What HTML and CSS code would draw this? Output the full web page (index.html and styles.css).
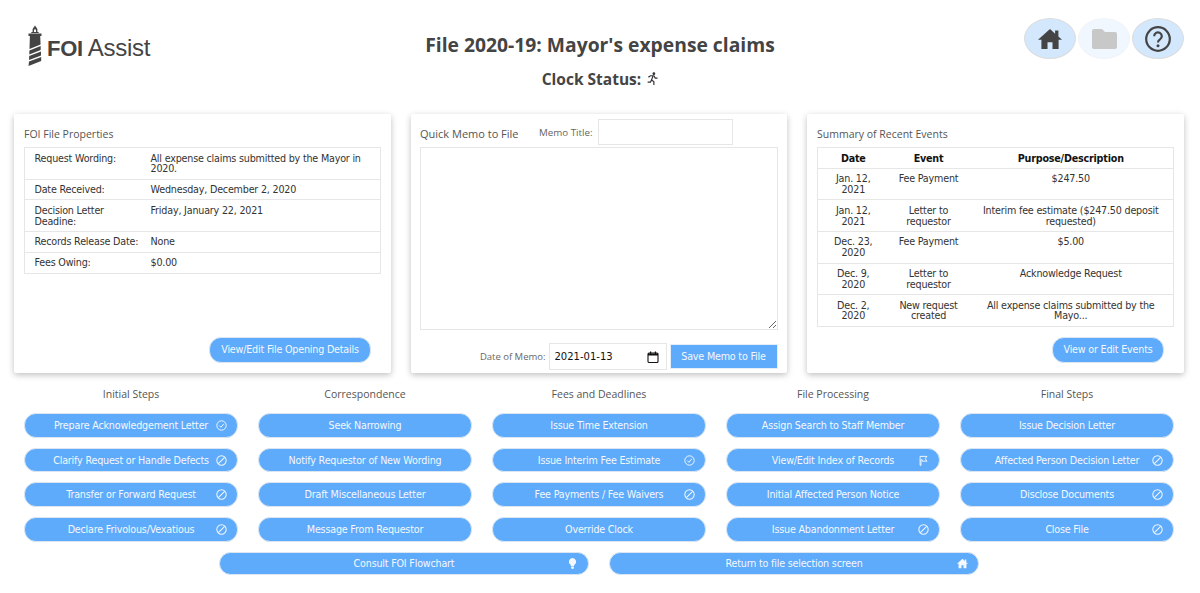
FILE: index.html
```html
<!DOCTYPE html>
<html lang="en">
<head>
    <meta charset="UTF-8">
    <title>FOI Assist</title>
    <link rel="stylesheet" href="styles.css">
</head>
<body>
    <svg class="defs" width="0" height="0">
        <symbol id="i-ban" viewBox="0 0 16 16">
            <circle cx="8" cy="8" r="6.8" fill="none" stroke="currentColor" stroke-width="1.5"/>
            <path d="M3.4 12.6 12.6 3.4" stroke="currentColor" stroke-width="1.5"/>
        </symbol>
        <symbol id="i-check" viewBox="0 0 16 16">
            <circle cx="8" cy="8" r="6.8" fill="none" stroke="currentColor" stroke-width="1.4"/>
            <path d="M4.8 8.2 7.2 10.6 11.4 5.6" fill="none" stroke="currentColor" stroke-width="1.4"/>
        </symbol>
        <symbol id="i-flag" viewBox="0 0 16 16">
            <path d="M3 15V2h10l-2.500 3.500L13 9H6.500L6 7H4.300v8z" fill="none" stroke="currentColor" stroke-width="1.400"/>
        </symbol>
        <symbol id="i-bulb" viewBox="0 0 16 16">
            <path d="M8 0a5.300 5.300 0 0 0-3.200 9.500c.7.600 1 1.200 1 2h4.400c0-.8.300-1.400 1-2A5.300 5.300 0 0 0 8 0z" fill="currentColor"/>
            <path d="M6 12.500h4V14l-1 2H7l-1-2z" fill="currentColor"/>
        </symbol>
        <symbol id="i-home" viewBox="0 0 16 16">
            <path d="M8 1 0 8.500h2.300V15h4.200v-4.500h3V15h4.200V8.500H16L13.500 6.200V2.200h-2v2.100z" fill="currentColor"/>
        </symbol>
    </svg>

    <header class="top">
        <div class="logo">
            <svg class="logo-mark" viewBox="0 0 16 44" width="16" height="44">
                <path d="M5.600 5 8 1.500 10.400 5v3h1.300v1H4.300V8h1.300zM7 5.500V8h2V5.500z" fill="#444"/>
                <path d="M1.500 9.500h13v2.500h-1.300l.4 8.500L2.500 25l.4-13H1.500z" fill="#444"/>
                <path d="M2.400 26.500 13.700 22v4L2.300 30.500z" fill="#444"/>
                <path d="M2.200 32 14 27.500v4L2.100 36z" fill="#444"/>
                <path d="M2 37.500 14.200 33v4L1.500 42z" fill="#444"/>
            </svg>
            <span class="logo-text"><b>FOI</b> Assist</span>
        </div>
        <div class="heading">
            <h1>File 2020-19: Mayor's expense claims</h1>
            <h2>Clock Status:
                <svg class="runner" viewBox="0 0 12 14" width="11" height="13">
                    <circle cx="7.500" cy="1.700" r="1.500" fill="#333"/>
                    <path d="M1.500 5.500 4 4h3.500l1.500 2.500h2.500M6.500 4.500 5 8.500l2.500 2V14M5 8.500 3.800 11H.7" fill="none" stroke="#333" stroke-width="1.300"/>
                </svg>
            </h2>
        </div>
        <nav class="nav-icons">
            <a class="nav-btn" href="javascript:">
                <svg viewBox="0 0 24 20" width="24" height="20"><path d="M12 0 0 10.800h3.400V20h6.100v-6.700h5V20h6.100v-9.200H24l-3.600-3.200V1.400h-3.300v3.300z" fill="#444"/></svg>
            </a>
            <a class="nav-btn nav-off" href="javascript:">
                <svg viewBox="0 0 25 20" width="25" height="20"><path d="M2 0h8l3 3h10a2 2 0 0 1 2 2v13a2 2 0 0 1-2 2H2a2 2 0 0 1-2-2V2a2 2 0 0 1 2-2z" fill="#c8c8c8"/></svg>
            </a>
            <a class="nav-btn" href="javascript:">
                <svg viewBox="0 0 26 26" width="26" height="26">
                    <circle cx="13" cy="13" r="11.800" fill="none" stroke="#444" stroke-width="2.200"/>
                    <path d="M9.200 10.200a3.800 3.800 0 1 1 5.800 3.200c-1.300.8-2 1.500-2 3" fill="none" stroke="#444" stroke-width="2.200"/>
                    <circle cx="13" cy="19.800" r="1.500" fill="#444"/>
                </svg>
            </a>
        </nav>
    </header>

    <main class="panels">
        <section class="panel">
            <div class="panel-title">FOI File Properties</div>
            <table class="info props">
                <tr><td class="props-label">Request Wording:</td><td>All expense claims submitted by the Mayor in 2020.</td></tr>
                <tr><td class="props-label">Date Received:</td><td>Wednesday, December 2, 2020</td></tr>
                <tr><td class="props-label">Decision Letter Deadine:</td><td>Friday, January 22, 2021</td></tr>
                <tr><td class="props-label">Records Release Date:</td><td>None</td></tr>
                <tr><td class="props-label">Fees Owing:</td><td>$0.00</td></tr>
            </table>
            <a class="btn panel-btn btn-wide" href="javascript:">View/Edit File Opening Details</a>
        </section>

        <section class="panel panel-memo">
            <div class="memo-top">
                <div class="panel-title">Quick Memo to File</div>
                <label class="memo-label memo-title-label">Memo Title:</label>
                <input class="memo-title" type="text">
            </div>
            <textarea class="memo-text"></textarea>
            <div class="memo-bottom">
                <label class="memo-label">Date of Memo:</label>
                <div class="memo-date">
                    <input type="text" value="2021-01-13">
                    <svg viewBox="0 0 12 12" width="12" height="12">
                        <path d="M1 3a1 1 0 0 1 1-1h8a1 1 0 0 1 1 1v7.500a1 1 0 0 1-1 1H2a1 1 0 0 1-1-1z" fill="none" stroke="#111" stroke-width="1.100"/>
                        <path d="M1 2.500h10v2H1zM3 .5h1.200v2H3zM7.800 .5H9v2H7.800z" fill="#111"/>
                    </svg>
                </div>
                <a class="btn memo-save" href="javascript:">Save Memo to File</a>
            </div>
        </section>

        <section class="panel">
            <div class="panel-title">Summary of Recent Events</div>
            <table class="info events">
                <colgroup><col class="col-date"><col class="col-event"><col></colgroup>
                <tr class="events-head"><th>Date</th><th>Event</th><th>Purpose/Description</th></tr>
                <tr><td>Jan. 12, 2021</td><td>Fee Payment</td><td>$247.50</td></tr>
                <tr><td>Jan. 12, 2021</td><td>Letter to requestor</td><td>Interim fee estimate ($247.50 deposit requested)</td></tr>
                <tr><td>Dec. 23, 2020</td><td>Fee Payment</td><td>$5.00</td></tr>
                <tr><td>Dec. 9, 2020</td><td>Letter to requestor</td><td>Acknowledge Request</td></tr>
                <tr><td>Dec. 2, 2020</td><td>New request created</td><td>All expense claims submitted by the Mayo...</td></tr>
            </table>
            <a class="btn panel-btn btn-events" href="javascript:">View or Edit Events</a>
        </section>
    </main>

    <section class="steps">
        <div class="step-col">
            <div class="step-title">Initial Steps</div>
            <a class="btn step" href="javascript:"><span>Prepare Acknowledgement Letter</span><svg><use href="#i-check"/></svg></a>
            <a class="btn step" href="javascript:"><span>Clarify Request or Handle Defects</span><svg><use href="#i-ban"/></svg></a>
            <a class="btn step" href="javascript:"><span>Transfer or Forward Request</span><svg><use href="#i-ban"/></svg></a>
            <a class="btn step" href="javascript:"><span>Declare Frivolous/Vexatious</span><svg><use href="#i-ban"/></svg></a>
        </div>
        <div class="step-col">
            <div class="step-title">Correspondence</div>
            <a class="btn step" href="javascript:"><span>Seek Narrowing</span></a>
            <a class="btn step" href="javascript:"><span>Notify Requestor of New Wording</span></a>
            <a class="btn step" href="javascript:"><span>Draft Miscellaneous Letter</span></a>
            <a class="btn step" href="javascript:"><span>Message From Requestor</span></a>
        </div>
        <div class="step-col">
            <div class="step-title">Fees and Deadlines</div>
            <a class="btn step" href="javascript:"><span>Issue Time Extension</span></a>
            <a class="btn step" href="javascript:"><span>Issue Interim Fee Estimate</span><svg><use href="#i-check"/></svg></a>
            <a class="btn step" href="javascript:"><span>Fee Payments / Fee Waivers</span><svg><use href="#i-ban"/></svg></a>
            <a class="btn step" href="javascript:"><span>Override Clock</span></a>
        </div>
        <div class="step-col">
            <div class="step-title">File Processing</div>
            <a class="btn step" href="javascript:"><span>Assign Search to Staff Member</span></a>
            <a class="btn step" href="javascript:"><span>View/Edit Index of Records</span><svg><use href="#i-flag"/></svg></a>
            <a class="btn step" href="javascript:"><span>Initial Affected Person Notice</span></a>
            <a class="btn step" href="javascript:"><span>Issue Abandonment Letter</span><svg><use href="#i-ban"/></svg></a>
        </div>
        <div class="step-col">
            <div class="step-title">Final Steps</div>
            <a class="btn step" href="javascript:"><span>Issue Decision Letter</span></a>
            <a class="btn step" href="javascript:"><span>Affected Person Decision Letter</span><svg><use href="#i-ban"/></svg></a>
            <a class="btn step" href="javascript:"><span>Disclose Documents</span><svg><use href="#i-ban"/></svg></a>
            <a class="btn step" href="javascript:"><span>Close File</span><svg><use href="#i-ban"/></svg></a>
        </div>
    </section>

    <div class="bottom-row">
        <a class="btn step step-long" href="javascript:"><span>Consult FOI Flowchart</span><svg><use href="#i-bulb"/></svg></a>
        <a class="btn step step-long" href="javascript:"><span>Return to file selection screen</span><svg><use href="#i-home"/></svg></a>
    </div>
</body>
</html>
```

FILE: styles.css
```css
html, body { height: 100%; }
body {
    margin: 0;
    padding: 0;
    overflow: hidden;
    background: #fff;
    color: #333;
    font-family: "DejaVu Sans", Verdana, sans-serif;
    font-size: 9.600px;
    letter-spacing: -.2px;
}
a { text-decoration: none; }
.defs { display: block; height: 0; }

/* header */
.top {
    display: grid;
    grid-template-columns: 1fr auto 1fr;
    height: 114px;
    padding: 0 16px;
    box-sizing: border-box;
    letter-spacing: 0;
}
.logo {
    display: flex;
    align-items: flex-start;
    gap: 4px;
    padding: 24px 0 0 11px;
}
.logo-text {
    margin-top: 11px;
    font-family: "Liberation Sans", Arial, sans-serif;
    font-size: 24px;
    line-height: 26px;
    color: #444;
    letter-spacing: -.3px;
}
.logo-text b { font-size: 22px; }
.heading {
    font-family: "Open Sans", "Noto Sans", sans-serif;
    color: #444;
    text-align: center;
}
.heading h1 {
    margin: 31px 0 0;
    font-size: 19.300px;
    line-height: 28px;
    font-weight: 700;
}
.heading h2 {
    margin: 9px 0 0;
    font-size: 15.500px;
    line-height: 22px;
    font-weight: 700;
}
.runner { vertical-align: 0; margin-left: 2px; }
.nav-icons {
    display: flex;
    justify-content: flex-end;
    gap: 2px;
    padding-top: 18px;
}
.nav-btn {
    display: flex;
    align-items: center;
    justify-content: center;
    width: 52px;
    height: 41px;
    box-sizing: border-box;
    border: 1px solid #dcdcdc;
    border-radius: 50%;
    background: #d3e7fd;
}
.nav-off {
    background: #f0f7fe;
    border-color: #f0f4f8;
}

/* three panels */
.panels {
    display: grid;
    grid-template-columns: repeat(3, 376.500px);
    grid-template-rows: 259px;
    gap: 20px;
    padding-left: 14px;
}
.panel {
    display: flex;
    flex-direction: column;
    padding: 0 9.500px 10px 10px;
    background: #fff;
    border-radius: 2px;
    box-shadow: 0 2px 6px rgba(0,0,0,.25);
}
.panel-memo { padding: 0 9.500px 3px; }
.panel-title {
    height: 33px;
    line-height: 40px;
    font-family: "Open Sans", "Noto Sans", sans-serif;
    font-size: 10.500px;
    letter-spacing: 0;
    color: #555;
}
.info {
    width: 100%;
    table-layout: fixed;
    border-collapse: collapse;
    border: 1px solid #e6e6e6;
    font-size: 9.600px;
    line-height: 10.800px;
    color: #333;
}
.info td, .info th {
    padding: 5.500px 10px 3.500px 9.500px;
    border-top: 1px solid #e6e6e6;
    vertical-align: top;
}
.info .props-label { width: 105.500px; padding-right: 1px; }
.events { text-align: center; }
.events td, .events th { padding-left: 4px; padding-right: 4px; }
.events td:first-child { padding-left: 10px; padding-right: 10px; }
.col-date { width: 71px; }
.col-event { width: 80px; }
.events-head th { color: #111; }

.btn {
    box-sizing: border-box;
    border: 1px solid #dbe6f2;
    background: #5eaafb;
    color: #f4f8fd;
    font-size: 9.600px;
    text-align: center;
}
.panel-btn {
    align-self: flex-end;
    height: 26px;
    line-height: 24px;
    margin-top: auto;
    margin-right: 10px;
    border-radius: 12px;
}
.btn-wide { width: 162px; }
.btn-events { width: 112px; }

/* memo */
.memo-top {
    display: flex;
    align-items: flex-start;
    height: 33px;
}
.memo-top .panel-title { width: 119px; font-size: 11px; }
.memo-label {
    font-family: "Open Sans", "Noto Sans", sans-serif;
    font-size: 9.750px;
    letter-spacing: 0;
    color: #666;
}
.memo-title-label { line-height: 37px; margin-right: 6px; }
.memo-title {
    width: 135px;
    height: 26px;
    margin-top: 5px;
    padding: 0;
    box-sizing: border-box;
    border: 1px solid #e6e6e6;
    outline: none;
}
.memo-text {
    display: block;
    height: 183px;
    margin: 0;
    box-sizing: border-box;
    border: 1px solid #e6e6e6;
    outline: none;
}
.memo-bottom {
    display: flex;
    align-items: center;
    justify-content: flex-end;
    gap: 3px;
    margin-top: 13px;
}
.memo-bottom .memo-label { font-size: 9.500px; }
.memo-date {
    display: flex;
    align-items: center;
    width: 118px;
    height: 27px;
    padding: 0 7px 0 5px;
    box-sizing: border-box;
    border: 1px solid #e6e6e6;
    background: #fff;
}
.memo-date input {
    flex: 1;
    min-width: 0;
    padding: 0;
    border: none;
    outline: none;
    font-family: "DejaVu Sans", Verdana, sans-serif;
    font-size: 10px;
    color: #111;
}
.memo-save {
    width: 108px;
    height: 25px;
    line-height: 23px;
    border-color: #e4eef9;
}

/* step buttons */
.steps {
    display: grid;
    grid-template-columns: repeat(5, 214px);
    justify-content: center;
    column-gap: 20px;
    padding-right: 2px;
}
.step-col {
    display: flex;
    flex-direction: column;
    gap: 10px;
}
.step-title {
    height: 30px;
    line-height: 42px;
    text-align: center;
    font-family: "Open Sans", "Noto Sans", sans-serif;
    font-size: 10.500px;
    letter-spacing: 0;
    color: #555;
}
.step {
    display: grid;
    grid-template-columns: 1fr auto 1fr;
    align-items: center;
    column-gap: 4px;
    height: 24.700px;
    padding: 0 10px;
    border-radius: 12px;
}
.step span { grid-column: 2; }
.step svg {
    grid-column: 3;
    justify-self: end;
    width: 11px;
    height: 11px;
    color: #f4f8fd;
}
.bottom-row {
    display: flex;
    justify-content: center;
    gap: 20px;
    margin-top: 10px;
    padding-right: 2px;
}
.step-long { width: 370px; height: 23.500px; }
```
